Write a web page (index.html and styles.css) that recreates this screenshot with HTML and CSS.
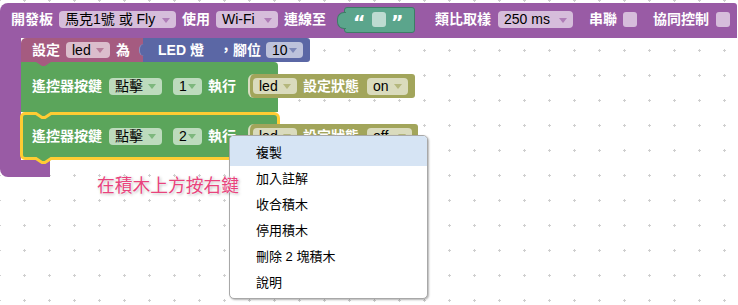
FILE: index.html
```html
<!DOCTYPE html>
<html lang="zh-Hant">
<head>
<meta charset="utf-8">
<title>Blockly</title>
<link rel="stylesheet" href="styles.css">
</head>
<body>
<div class="workspace">
  <div class="blk-main">
    <div class="main-top">
      <span class="lbl">開發板</span>
      <span class="dd dd-board"><span class="dd-t">馬克1號 或 Fly</span><i class="arr"></i></span>
      <span class="lbl">使用</span>
      <span class="dd dd-wifi"><span class="dd-t">Wi-Fi</span><i class="arr"></i></span>
      <span class="lbl">連線至</span>
      <span class="txt-blk"><span class="q">“</span><span class="txt-field"></span><span class="q q2">”</span></span>
      <span class="lbl lbl-rate">類比取樣</span>
      <span class="dd dd-rate"><span class="dd-t">250 ms</span><i class="arr"></i></span>
      <span class="lbl lbl-sep">串聯</span>
      <span class="cb"></span>
      <span class="lbl lbl-sep">協同控制</span>
      <span class="cb cb-last"></span>
    </div>
    <div class="main-body">
      <div class="spine"></div>
      <div class="stack">
        <div class="row-set">
          <div class="blk-set">
            <span class="lbl">設定</span>
            <span class="dd dd-led"><span class="dd-t">led</span><i class="arr"></i></span>
            <span class="lbl">為</span>
          </div>
          <div class="blk-led">
            <span class="lbl lbl-led">LED 燈</span>
            <span class="lbl">，腳位</span>
            <span class="dd dd-pin"><span class="dd-t">10</span><i class="arr"></i></span>
          </div>
        </div>
        <div class="blk-btn">
          <span class="lbl">遙控器按鍵</span>
          <span class="dd dd-click"><span class="dd-t">點擊</span><i class="arr"></i></span>
          <span class="dd dd-num"><span class="dd-t">1</span><i class="arr"></i></span>
          <span class="lbl lbl-run">執行</span>
          <span class="blk-state">
            <span class="dd dd-led"><span class="dd-t">led</span><i class="arr"></i></span>
            <span class="lbl lbl-state">設定狀態</span>
            <span class="dd dd-on"><span class="dd-t">on</span><i class="arr"></i></span>
          </span>
        </div>
        <div class="blk-btn sel">
          <svg class="tab tab-top" width="21" height="8" viewBox="0 0 21 8"><path d="M2 0H19L12.5 4.3H8.5Z" fill="#5BA55B"/><path d="M0 1.5H3L9 5.5H12L18 1.5H21" fill="none" stroke="#FFCC33" stroke-width="3"/></svg>
          <span class="lbl">遙控器按鍵</span>
          <span class="dd dd-click"><span class="dd-t">點擊</span><i class="arr"></i></span>
          <span class="dd dd-num"><span class="dd-t">2</span><i class="arr"></i></span>
          <span class="lbl lbl-run">執行</span>
          <span class="blk-state blk-state2">
            <span class="dd dd-led"><span class="dd-t">led</span><i class="arr"></i></span>
            <span class="lbl lbl-state">設定狀態</span>
            <span class="dd dd-off"><span class="dd-t">off</span><i class="arr"></i></span>
          </span>
          <svg class="tab tab-bottom" width="21" height="8" viewBox="0 0 21 8"><path d="M2 0H19L12.5 4.3H8.5Z" fill="#5BA55B"/><path d="M0 1.5H3L9 5.5H12L18 1.5H21" fill="none" stroke="#FFCC33" stroke-width="3"/></svg>
        </div>
      </div>
    </div>
    <div class="main-bottom"></div>
  </div>

  <div class="menu">
    <div class="mi mi-hl">複製</div>
    <div class="mi">加入註解</div>
    <div class="mi">收合積木</div>
    <div class="mi">停用積木</div>
    <div class="mi">刪除 2 塊積木</div>
    <div class="mi">說明</div>
  </div>

  <div class="note">在積木上方按右鍵</div>
</div>
</body>
</html>
```

FILE: styles.css
```css
* { box-sizing: border-box; }

html, body { margin: 0; padding: 0; }

body {
  width: 738px;
  height: 305px;
  overflow: hidden;
  background-color: #fff;
  background-image: url("data:image/svg+xml,%3Csvg xmlns='http://www.w3.org/2000/svg' width='25' height='25'%3E%3Cpath d='M11 12h3v1h-3zM12 11h1v3h-1z' fill='%23cfcfcf'/%3E%3C/svg%3E");
  background-position: 12px -12px;
  font-family: "Liberation Sans", "Noto Sans CJK TC", sans-serif;
  font-size: 14px;
}

.workspace {
  position: relative;
  width: 738px;
  height: 305px;
}

/* ---------- generic fields ---------- */
.lbl {
  flex-shrink: 0;
  color: #fff;
  font-weight: bold;
  font-size: 14px;
  line-height: 17px;
  white-space: nowrap;
}

.dd {
  flex-shrink: 0;
  display: flex;
  align-items: center;
  justify-content: space-between;
  height: 17px;
  padding: 0 6px 0 6px;
  border-radius: 4px;
  background: rgba(255, 255, 255, 0.6);
  color: #000;
  font-size: 14px;
  line-height: 17px;
  white-space: nowrap;
}

.arr {
  display: block;
  width: 0;
  height: 0;
  border-left: 4.5px solid transparent;
  border-right: 4.5px solid transparent;
  border-top: 5px solid var(--c);
  opacity: 0.65;
  margin-top: 1px;
}

.cb {
  flex-shrink: 0;
  width: 14px;
  height: 15px;
  border-radius: 3px;
  background: rgba(255, 255, 255, 0.6);
}

/* ---------- main (purple) block ---------- */
.blk-main {
  position: absolute;
  left: 0;
  top: 3px;
  --c: #995BA5;
}

.main-top {
  width: 737px;
  height: 35px;
  padding: 0 0 2px 11px;
  background: #995BA5;
  border-radius: 8px 3px 0 0;
  display: flex;
  align-items: center;
  gap: 6px;
}

.dd-board { width: 117px; }
.dd-wifi { width: 62px; }
.dd-rate { width: 75px; margin-left: 1px; }
.lbl-rate { margin-left: 14px; }
.lbl-sep { margin-left: 10px; }
.cb-last { margin-left: 1px; }

.txt-blk {
  position: relative;
  flex-shrink: 0;
  margin-left: 12px;
  width: 71px;
  height: 26px;
  background: #5BA58C;
  border: 1px solid #3E7C67;
  border-radius: 3px;
  display: flex;
  align-items: center;
  padding-left: 8px;
}

.txt-blk::before {
  content: "";
  position: absolute;
  left: -8px;
  top: 4px;
  width: 8px;
  height: 15px;
  background: #5BA58C;
  border: 1px solid #3E7C67;
  border-right: none;
  border-radius: 7px 0 0 7px;
}

.q {
  width: 12px;
  height: 17px;
  text-align: center;
  color: #fff;
  font-family: "DejaVu Sans", sans-serif;
  font-weight: bold;
  font-size: 19px;
  line-height: 22px;
}

.q2 { margin-left: 5px; }

.txt-field {
  width: 14px;
  height: 15px;
  margin-left: 7px;
  border-radius: 3px;
  background: rgba(255, 255, 255, 0.6);
}

.main-body {
  display: flex;
}

.spine {
  flex-shrink: 0;
  width: 21px;
  background: #995BA5;
}

.stack {
  display: flex;
  flex-direction: column;
}

.main-bottom {
  width: 50px;
  height: 17px;
  background: #995BA5;
  border-radius: 0 0 0 8px;
}

/* ---------- set led block ---------- */
.row-set {
  display: flex;
  height: 24px;
}

.blk-set {
  position: relative;
  --c: #A55B80;
  width: 122px;
  height: 24px;
  background: #A55B80;
  border-radius: 5px 0 0 0;
  padding-left: 11px;
  display: flex;
  align-items: center;
  gap: 6px;
}

.blk-set::after {
  content: "";
  position: absolute;
  left: 15px;
  bottom: -4px;
  width: 15px;
  height: 4px;
  background: #A55B80;
  clip-path: polygon(0 0, 100% 0, 9px 100%, 6px 100%);
}

.dd-led { width: 44px; height: 16px; }

.blk-led {
  position: relative;
  --c: #5B67A5;
  width: 167px;
  height: 24px;
  background: #5B67A5;
  border-radius: 0 3px 3px 0;
  padding-left: 15px;
  display: flex;
  align-items: center;
}

.blk-led::before {
  content: "";
  position: absolute;
  left: -4px;
  top: 6px;
  width: 5px;
  height: 12px;
  background: #5B67A5;
  border-left: 1px solid #8a93c4;
  border-radius: 5px 0 0 5px;
}

.lbl-led { width: 61px; }
.dd-pin { width: 37px; margin-left: 5px; height: 16px; }

/* ---------- button blocks ---------- */
.blk-btn {
  --c: #5BA55B;
  width: 257px;
  height: 50px;
  background: #5BA55B;
  padding: 0 0 2px 11px;
  display: flex;
  align-items: center;
  border-radius: 0 4px 0 0;
}

.dd-click { width: 53px; margin-left: 7px; }
.dd-num { width: 29px; margin-left: 11px; }
.lbl-run { margin-left: 6px; }

.sel {
  position: relative;
  width: 260px;
  height: 48px;
  margin-left: -1px;
  padding: 0 0 0 9px;
  border: 3px solid #FFCC33;
  border-radius: 5px 6px 4px 5px;
}

.tab {
  position: absolute;
  left: 10px;
  display: block;
}

.tab-top { top: -3px; }
.tab-bottom { top: 42px; }

.blk-state {
  position: relative;
  --c: #A2A55B;
  flex-shrink: 0;
  margin-left: 12px;
  width: 167px;
  height: 24px;
  background: #A2A55B;
  border-left: 2px solid #d9dcc0;
  border-radius: 6px 3px 3px 6px;
  padding-left: 3px;
  display: flex;
  align-items: center;
}

.blk-state2 { width: 170px; }

.lbl-state { margin-left: 6px; }
.dd-on { width: 41px; margin-left: 8px; }
.dd-off { width: 45px; margin-left: 8px; }

/* ---------- context menu ---------- */
.menu {
  position: absolute;
  left: 229px;
  top: 135px;
  width: 199px;
  height: 164px;
  z-index: 5;
  background: #fff;
  border: 1px solid #a8a8a8;
  border-radius: 5px;
  box-shadow: 1px 1px 2px rgba(0, 0, 0, 0.3);
  padding: 0 0 2px;
  font-family: "Liberation Sans", "Noto Sans CJK TC", sans-serif;
  font-size: 13px;
  color: #000;
}

.mi {
  height: 26px;
  line-height: 26px;
  padding-left: 26px;
  white-space: nowrap;
}

.mi-hl {
  height: 30px;
  padding-top: 4px;
  background: #d6e4f4;
  border-radius: 4px 4px 0 0;
}

/* ---------- annotation ---------- */
.note {
  position: absolute;
  left: 97px;
  top: 175px;
  z-index: 6;
  font-family: "Noto Sans CJK TC", sans-serif;
  font-size: 17.75px;
  line-height: 18px;
  color: #E8437C;
  white-space: nowrap;
  text-shadow: 0 0 2px #fff, 0 0 2px #fff, 1px 1px 3px rgba(0, 0, 0, 0.35);
}
```
